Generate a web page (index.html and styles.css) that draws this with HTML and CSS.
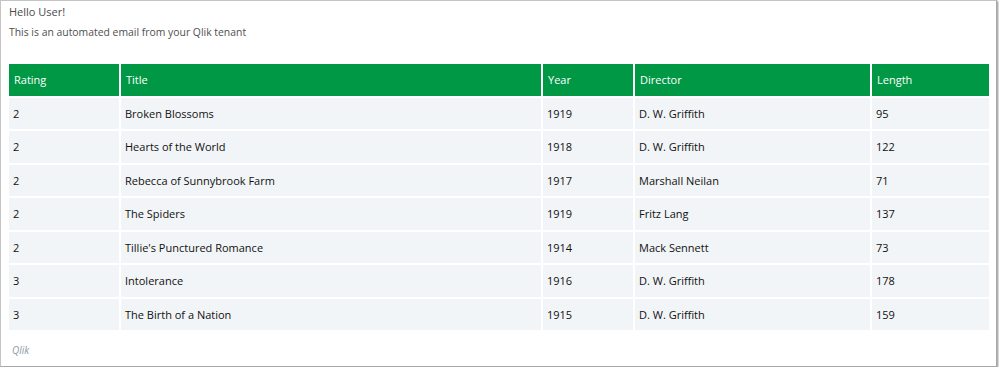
FILE: index.html
```html
<!DOCTYPE html>
<html>
<head>
<meta charset="utf-8">
<link rel="stylesheet" href="styles.css">
</head>
<body>
<div class="frame">
  <p class="hello">Hello User!</p>
  <p class="intro">This is an automated email from your Qlik tenant</p>
  <table class="report">
    <colgroup>
      <col class="c-rating"><col class="c-title"><col class="c-year"><col class="c-director"><col class="c-length">
    </colgroup>
    <thead>
      <tr><th>Rating</th><th>Title</th><th>Year</th><th>Director</th><th>Length</th></tr>
    </thead>
    <tbody>
      <tr><td>2</td><td>Broken Blossoms</td><td>1919</td><td>D. W. Griffith</td><td>95</td></tr>
      <tr><td>2</td><td>Hearts of the World</td><td>1918</td><td>D. W. Griffith</td><td>122</td></tr>
      <tr><td>2</td><td>Rebecca of Sunnybrook Farm</td><td>1917</td><td>Marshall Neilan</td><td>71</td></tr>
      <tr><td>2</td><td>The Spiders</td><td>1919</td><td>Fritz Lang</td><td>137</td></tr>
      <tr><td>2</td><td>Tillie's Punctured Romance</td><td>1914</td><td>Mack Sennett</td><td>73</td></tr>
      <tr><td>3</td><td>Intolerance</td><td>1916</td><td>D. W. Griffith</td><td>178</td></tr>
      <tr><td>3</td><td>The Birth of a Nation</td><td>1915</td><td>D. W. Griffith</td><td>159</td></tr>
    </tbody>
  </table>
  <p class="footer">Qlik</p>
</div>
</body>
</html>
```
FILE: styles.css
```css
html, body {
  margin: 0;
  padding: 0;
  background: #ffffff;
}
body {
  font-family: "Open Sans", "Noto Sans", sans-serif;
}
.frame {
  box-sizing: border-box;
  width: 997px;
  height: 367px;
  margin: 0;
  border: 1px solid #a8a8a8;
  border-top-color: #c4c4c4;
  border-left-color: #c4c4c4;
  box-shadow: 1px 1px 2px rgba(0,0,0,0.45);
  padding: 3px 8px 0 6px;
  background: #fff;
}
.hello {
  margin: 0 0 0 2px;
  font-size: 11px;
  line-height: 16px;
  color: #4a4a4a;
}
.intro {
  margin: 4px 0 0 2px;
  font-size: 10.4px;
  line-height: 16px;
  color: #4f4f4f;
}
.report {
  margin-top: 22px;
  width: 984px;
  table-layout: fixed;
  border-collapse: separate;
  border-spacing: 2px 2px;
  font-size: 11px;
}
.c-rating { width: 110px; }
.c-title { width: 420px; }
.c-year { width: 90px; }
.c-director { width: 235px; }
.c-length { width: 117px; }
.report th {
  background: #009845;
  color: #ffffff;
  font-weight: normal;
  text-align: left;
  height: 31.5px;
  padding: 0 5px;
}
.report td {
  background: #f2f5f7;
  color: #111111;
  height: 31.5px;
  padding: 0 4px;
}
.footer {
  margin: 11px 0 0 5px;
  font-size: 10px;
  font-style: italic;
  color: #8c9aa8;
}
```
